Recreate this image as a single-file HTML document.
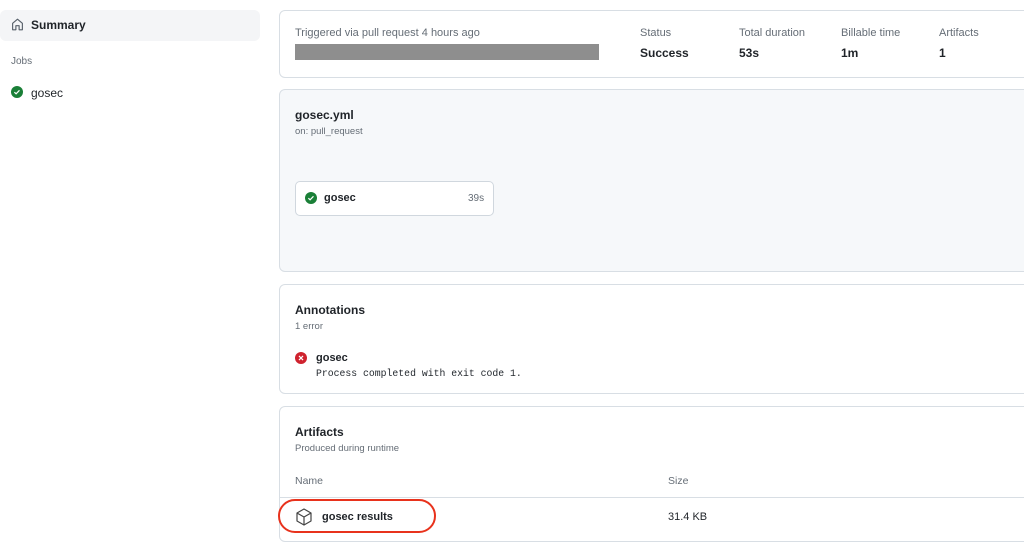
<!DOCTYPE html>
<html><head><meta charset="utf-8"><style>
*{box-sizing:border-box;margin:0;padding:0}
body{width:1024px;height:547px;overflow:hidden;background:#fff;font-family:"Liberation Sans",sans-serif;color:#1f2328;position:relative}
.abs{position:absolute}
.card{position:absolute;left:279px;width:760px;border:1px solid #d8dee4;border-radius:6px;background:#fff}
.muted{color:#656d76}
.t{font-size:11px}
.b{font-weight:bold}
</style></head><body>
<div class="abs" style="left:0;top:10px;width:260px;height:31px;background:#f4f5f7;border-radius:6px"></div>
<svg class="abs" style="left:11px;top:18px" width="13" height="13" viewBox="0 0 16 16"><path d="M2 6.5L8 1.5l6 5V14.5H10V9.5H6v5H2z" fill="none" stroke="#57606a" stroke-width="1.4" stroke-linejoin="round"/></svg>
<div class="abs b" style="left:31px;top:18px;font-size:12px">Summary</div>
<div class="abs muted" style="left:11px;top:56px;font-size:10px">Jobs</div>
<svg class="abs" style="left:11px;top:86px" width="12" height="12" viewBox="0 0 16 16"><circle cx="8" cy="8" r="8" fill="#1a7f37"/><path d="M4.5 8.2l2.3 2.2 4.5-4.6" fill="none" stroke="#fff" stroke-width="1.6"/></svg>
<div class="abs" style="left:31px;top:86px;font-size:12px">gosec</div>

<div class="card" style="top:10px;height:68px">
 <div class="abs muted t" style="left:15px;top:16px">Triggered via pull request 4 hours ago</div>
 <div class="abs" style="left:15px;top:33px;width:304px;height:16px;background:#8e8e8e"></div>
 <div class="abs muted t" style="left:360px;top:16px">Status</div><div class="abs b" style="left:360px;top:35px;font-size:12px">Success</div>
 <div class="abs muted t" style="left:459px;top:16px">Total duration</div><div class="abs b" style="left:459px;top:35px;font-size:12px">53s</div>
 <div class="abs muted t" style="left:561px;top:16px">Billable time</div><div class="abs b" style="left:561px;top:35px;font-size:12px">1m</div>
 <div class="abs muted t" style="left:659px;top:16px">Artifacts</div><div class="abs b" style="left:659px;top:35px;font-size:12px">1</div>
</div>

<div class="card" style="top:89px;height:183px;background:#f6f8fa">
 <div class="abs b" style="left:15px;top:18px;font-size:12px">gosec.yml</div>
 <div class="abs muted" style="left:15px;top:36px;font-size:9.5px">on: pull_request</div>
 <div class="abs" style="left:15px;top:91px;width:199px;height:35px;background:#fff;border:1px solid #d0d7de;border-radius:5px">
  <svg class="abs" style="left:9px;top:10px" width="12" height="12" viewBox="0 0 16 16"><circle cx="8" cy="8" r="8" fill="#1a7f37"/><path d="M4.5 8.2l2.3 2.2 4.5-4.6" fill="none" stroke="#fff" stroke-width="1.6"/></svg>
  <div class="abs b" style="left:28px;top:10px;font-size:11px">gosec</div>
  <div class="abs muted" style="left:172px;top:11px;font-size:10px">39s</div>
 </div>
</div>

<div class="card" style="top:284px;height:110px">
 <div class="abs b" style="left:15px;top:18px;font-size:12px">Annotations</div>
 <div class="abs muted" style="left:15px;top:36px;font-size:9.5px">1 error</div>
 <svg class="abs" style="left:15px;top:67px" width="12" height="12" viewBox="0 0 16 16"><circle cx="8" cy="8" r="8" fill="#cf222e"/><path d="M5.3 5.3l5.4 5.4M10.7 5.3l-5.4 5.4" stroke="#fff" stroke-width="1.6"/></svg>
 <div class="abs b" style="left:36px;top:67px;font-size:11px">gosec</div>
 <div class="abs" style="left:36px;top:83px;font-size:9.8px;font-family:'Liberation Mono',monospace;color:#24292f">Process completed with exit code 1.</div>
</div>

<div class="card" style="top:406px;height:136px">
 <div class="abs b" style="left:15px;top:18px;font-size:12px">Artifacts</div>
 <div class="abs muted" style="left:15px;top:36px;font-size:9.5px">Produced during runtime</div>
 <div class="abs muted" style="left:15px;top:68px;font-size:10.5px">Name</div>
 <div class="abs muted" style="left:388px;top:68px;font-size:10.5px">Size</div>
 <div class="abs" style="left:0;top:90px;width:760px;height:1px;background:#d8dee4"></div>
 <svg class="abs" style="left:16px;top:101px" width="16" height="18" viewBox="0 0 16 18"><path d="M8 1L15 5v8l-7 4-7-4V5z M1 5l7 4 7-4 M8 9v8" fill="none" stroke="#444" stroke-width="1.2" stroke-linejoin="round"/></svg>
 <div class="abs b" style="left:42px;top:104px;font-size:11px">gosec results</div>
 <div class="abs" style="left:388px;top:104px;font-size:11px">31.4 KB</div>
</div>
<div class="abs" style="left:278px;top:499px;width:158px;height:34px;border:2.5px solid #e8321c;border-radius:17px"></div>
</body></html>
